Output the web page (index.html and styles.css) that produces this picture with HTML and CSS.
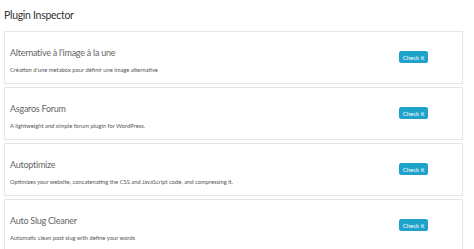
FILE: index.html
```html
<!DOCTYPE html>
<html>
<head>
<meta charset="utf-8">
<link rel="stylesheet" href="styles.css">
</head>
<body>
<div class="page">
  <h1 class="page-title">Plugin Inspector</h1>
  <div class="list">
    <div class="card">
      <div class="info">
        <div class="name">Alternative à l'image à la une</div>
        <div class="desc">Création d'une metabox pour définir une image alternative</div>
      </div>
      <button class="btn">Check it</button>
    </div>
    <div class="card">
      <div class="info">
        <div class="name">Asgaros Forum</div>
        <div class="desc">A lightweight and simple forum plugin for WordPress.</div>
      </div>
      <button class="btn">Check it</button>
    </div>
    <div class="card">
      <div class="info">
        <div class="name">Autoptimize</div>
        <div class="desc">Optimizes your website, concatenating the CSS and JavaScript code, and compressing it.</div>
      </div>
      <button class="btn">Check it</button>
    </div>
    <div class="card">
      <div class="info">
        <div class="name">Auto Slug Cleaner</div>
        <div class="desc">Automatic clean post slug with define your words</div>
      </div>
      <button class="btn">Check it</button>
    </div>
  </div>
</div>
</body>
</html>
```
FILE: styles.css
```css
html, body {
  margin: 0;
  padding: 0;
  background: #ffffff;
}
body {
  font-family: "Lato", "Open Sans", sans-serif;
}
.page {
  padding: 6px 11px 0 4px;
}
.page-title {
  margin: 0 0 7px 0;
  font-size: 10.5px;
  letter-spacing: -0.3px;
  line-height: 18px;
  font-weight: 400;
  color: #333;
}
.list {
  display: flex;
  flex-direction: column;
  gap: 3px;
}
.card {
  display: flex;
  align-items: center;
  justify-content: space-between;
  background: #fff;
  border: 1px solid #e6e6e6;
  padding: 14px 34px 9px 5px;
}
.name {
  font-size: 9px;
  letter-spacing: -0.25px;
  line-height: 14px;
  color: #666;
}
.desc {
  margin-top: 6px;
  font-size: 5.8px;
  line-height: 8px;
  color: #555;
}
.btn {
  border: 0;
  border-radius: 2px;
  background: #1fa2cc;
  color: #fff;
  font-family: inherit;
  font-size: 6px;
  width: 29px;
  height: 12px;
  padding: 0;
  margin-top: -6px;
}
```
